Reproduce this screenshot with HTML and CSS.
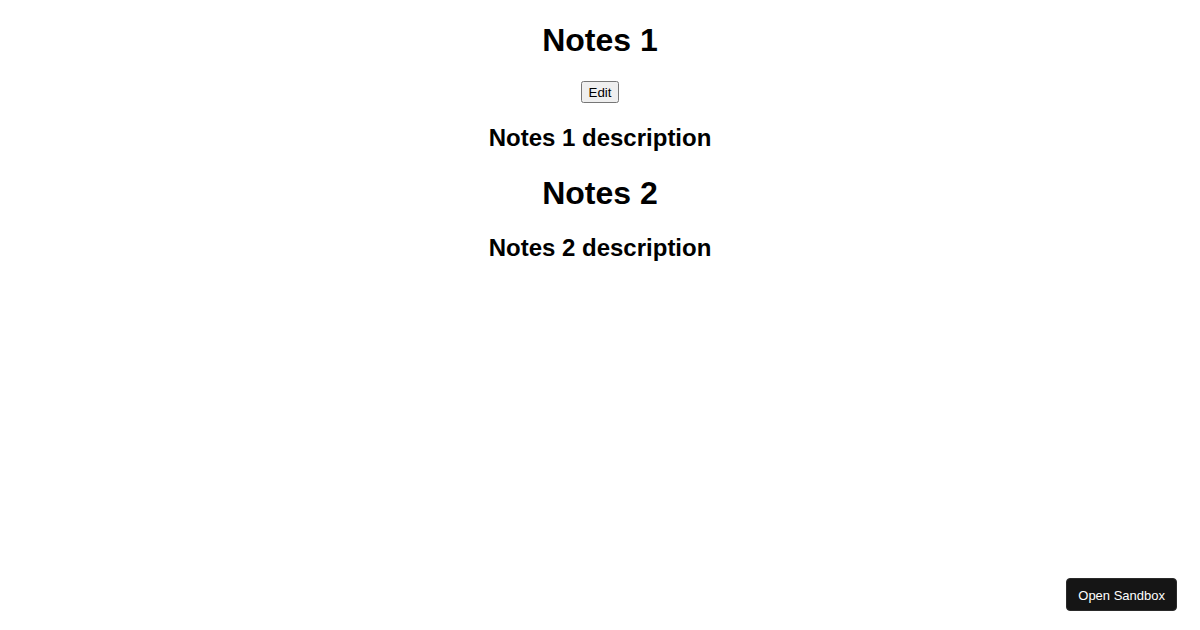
FILE: index.html
```html
<!DOCTYPE html>
<html>
<head>
<meta charset="utf-8">
<link rel="stylesheet" href="styles.css">
</head>
<body>
<div class="app">
  <div class="note">
    <h1 class="note-title">Notes 1</h1>
    <div class="note-actions"><button class="edit-btn">Edit</button></div>
    <h2 class="note-desc">Notes 1 description</h2>
  </div>
  <div class="note">
    <h1 class="note-title">Notes 2</h1>
    <h2 class="note-desc">Notes 2 description</h2>
  </div>
</div>
<a class="sandbox-btn">Open Sandbox</a>
</body>
</html>
```

FILE: styles.css
```css
body {
  margin: 0;
  padding: 1px 0 0;
  font-family: "Liberation Sans", Arial, sans-serif;
  text-align: center;
  color: #000;
  background: #fff;
}
.note-title {
  font-size: 32px;
  font-weight: bold;
  line-height: 1.15;
  margin: 21.44px 0;
}
.note-desc {
  font-size: 24px;
  font-weight: bold;
  line-height: 1.2;
  margin: 21px 0 23px;
}
.note-actions {
  line-height: 1;
}
.edit-btn {
  font-family: "Liberation Sans", Arial, sans-serif;
  font-size: 13.33px;
  padding: 2px 6px 1px;
}
.sandbox-btn {
  position: fixed;
  right: 23px;
  bottom: 19px;
  background: #151515;
  color: #fff;
  font-size: 13px;
  padding: 0 11px;
  height: 33px;
  line-height: 33px;
  border-radius: 4px;
  border: 1px solid #2a2a2a;
  box-sizing: border-box;
  cursor: pointer;
}
```
